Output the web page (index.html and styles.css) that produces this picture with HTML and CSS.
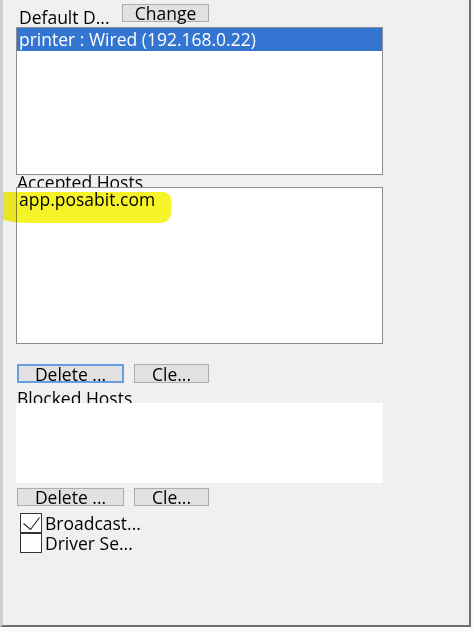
FILE: index.html
```html
<!DOCTYPE html>
<html>
<head>
<meta charset="utf-8">
<link rel="stylesheet" href="styles.css">
</head>
<body>
<div class="window">
  <div class="panel">
    <div class="top-row">
      <span class="label default-label">Default D...</span>
      <button class="btn change-btn">Change</button>
    </div>
    <div class="listbox lb-devices">
      <div class="item selected">printer : Wired (192.168.0.22)</div>
    </div>
    <div class="caption">Accepted Hosts</div>
    <div class="listbox lb-accepted">
      <div class="item">app.posabit.com</div>
    </div>
    <div class="btn-row row-accepted">
      <button class="btn del-btn focused">Delete ...</button>
      <button class="btn cle-btn">Cle...</button>
    </div>
    <div class="caption caption-blocked">Blocked Hosts</div>
    <div class="listbox lb-blocked"></div>
    <div class="btn-row row-blocked">
      <button class="btn del-btn">Delete ...</button>
      <button class="btn cle-btn">Cle...</button>
    </div>
    <div class="check-row first-check">
      <span class="box"><svg width="20" height="17" viewBox="0 0 20 17"><path d="M2.5 8.5 L9.5 14.5 L18.5 2.5" fill="none" stroke="#2b2b2b" stroke-width="1.2"/></svg></span>
      <span class="check-label">Broadcast...</span>
    </div>
    <div class="check-row">
      <span class="box"></span>
      <span class="check-label">Driver Se...</span>
    </div>
  </div>
  <div class="highlight"></div>
</div>
</body>
</html>
```

FILE: styles.css
```css
html, body {
  margin: 0;
  padding: 0;
}
body {
  background: #fafafa;
  font-family: "Open Sans", "Noto Sans", sans-serif;
  font-size: 17.5px;
  color: #000;
}
.window {
  position: relative;
  box-sizing: border-box;
  width: 471px;
  height: 627px;
  background: #f0f0f0;
  border-left: 3px solid #cdcdcd;
  border-right: 2px solid #6f6f6f;
  border-bottom: 2px solid #6f6f6f;
  overflow: hidden;
}
.panel {
  display: flex;
  flex-direction: column;
  padding: 4px 0 0 13px;
}
.top-row {
  display: flex;
  align-items: flex-start;
  height: 23px;
}
.label {
  line-height: 20px;
}
.default-label {
  width: 103px;
  padding: 3px 0 0 3px;
  white-space: nowrap;
}
.btn {
  box-sizing: border-box;
  margin: 0;
  padding: 0;
  font-family: inherit;
  font-size: 17.5px;
  line-height: 16px;
  color: #000;
  background: #e1e1e1;
  border: 1px solid #adadad;
  text-align: center;
  white-space: nowrap;
}
.change-btn {
  width: 87px;
  height: 18px;
}
.listbox {
  box-sizing: border-box;
  width: 367px;
  background: #fff;
  border: 1px solid #8c8c8c;
}
.lb-devices {
  height: 148px;
}
.lb-accepted {
  height: 157px;
}
.lb-blocked {
  height: 80px;
  border-color: #fefefe;
}
.item {
  height: 23px;
  line-height: 23px;
  padding-left: 2px;
  white-space: nowrap;
}
.item.selected {
  background: #3575d2;
  color: #fff;
}
.caption {
  height: 12px;
  line-height: 14px;
  padding-left: 1px;
  overflow: hidden;
  white-space: nowrap;
}
.caption-blocked {
  margin-top: 8px;
}
.btn-row {
  display: flex;
  padding-left: 1px;
}
.row-accepted {
  margin-top: 20px;
}
.row-accepted .btn {
  height: 19px;
}
.row-blocked {
  margin-top: 5px;
}
.row-blocked .btn {
  height: 18px;
}
.del-btn {
  width: 107px;
}
.cle-btn {
  width: 75px;
  margin-left: 10px;
}
.btn.focused {
  border: 2px solid #6a9ddf;
}
.check-row {
  display: flex;
  align-items: center;
  height: 20px;
  padding-left: 4px;
}
.first-check {
  margin-top: 7px;
}
.box {
  box-sizing: border-box;
  width: 22px;
  height: 20px;
  border: 1px solid #333;
  background: #fff;
  display: flex;
  align-items: center;
  justify-content: center;
}
.box svg {
  display: block;
}
.check-label {
  margin-left: 3px;
  line-height: 20px;
}
.highlight {
  position: absolute;
  left: -3px;
  top: 192px;
  width: 171px;
  height: 31px;
  background: #f6f428;
  mix-blend-mode: multiply;
  border-radius: 2px 8px 10px 30px / 2px 8px 10px 6px;
}
```
